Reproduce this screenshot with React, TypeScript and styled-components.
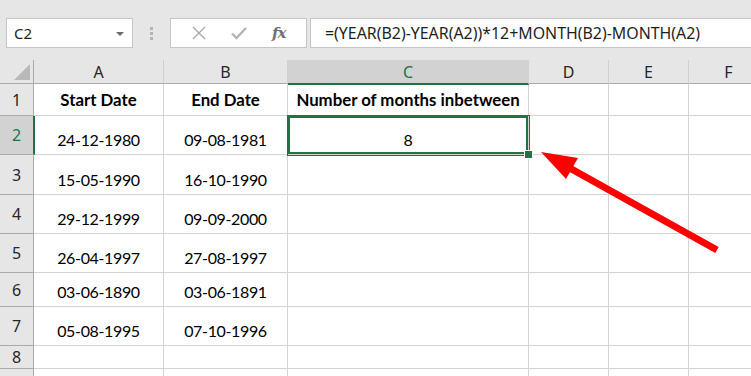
import React from 'react';
import styled, { createGlobalStyle } from 'styled-components';

const GlobalStyle = createGlobalStyle`
  html, body {
    margin: 0;
    padding: 0;
    background: #ffffff;
    overflow: hidden;
  }
  * { box-sizing: border-box; }
`;

// column widths (incl. right grid line) and row heights (incl. bottom line)
const colWidths = [34, 130, 124, 241, 80, 80, 80];
const rowHeights = [24, 32, 39, 40, 39, 39, 34, 39, 23, 22];

const letters = ['A', 'B', 'C', 'D', 'E', 'F'];

const data: string[][] = [
  ['Start Date', 'End Date', 'Number of months inbetween', '', '', ''],
  ['24-12-1980', '09-08-1981', '8', '', '', ''],
  ['15-05-1990', '16-10-1990', '', '', '', ''],
  ['29-12-1999', '09-09-2000', '', '', '', ''],
  ['26-04-1997', '27-08-1997', '', '', '', ''],
  ['03-06-1890', '03-06-1891', '', '', '', ''],
  ['05-08-1995', '07-10-1996', '', '', '', ''],
  ['', '', '', '', '', ''],
  ['', '', '', '', '', ''],
];

const Page = styled.div`
  width: 751px;
  height: 376px;
  overflow: hidden;
  background: #e6e6e6;
  display: flex;
  flex-direction: column;
`;

const Toolbar = styled.div`
  height: 60px;
  flex: none;
  display: flex;
  align-items: flex-start;
  padding: 18px 0 0 6px;
`;

const Box = styled.div<{ $w?: number }>`
  height: 30px;
  background: #ffffff;
  border: 1px solid #c6c6c6;
  display: flex;
  align-items: center;
  ${p => (p.$w ? `width: ${p.$w}px; flex: none;` : 'flex: 1; margin-right: -20px;')}
`;

const NameBox = styled(Box)`
  justify-content: space-between;
  padding: 0 8px 0 7px;
  font-family: 'Noto Sans', 'Open Sans', sans-serif;
  font-size: 15px;
  color: #1e1e1e;
`;

const Caret = styled.span`
  width: 0;
  height: 0;
  border-left: 4px solid transparent;
  border-right: 4px solid transparent;
  border-top: 4px solid #6a6a6a;
  margin-top: 1px;
`;

const Grip = styled.div`
  width: 37px;
  flex: none;
  height: 30px;
  display: flex;
  flex-direction: column;
  align-items: center;
  justify-content: center;
  gap: 2px;
  span {
    width: 3px;
    height: 3px;
    background: #b4b4b4;
  }
`;

const FxBox = styled(Box)`
  justify-content: space-around;
  padding: 0 8px 0 8px;
  margin-right: 3px;
`;

const Fx = styled.span`
  font-family: 'DejaVu Serif', 'Liberation Serif', serif;
  font-style: italic;
  font-weight: 700;
  font-size: 15px;
  color: #707070;
  letter-spacing: -1px;
`;

const Formula = styled(Box)`
  padding-left: 14px;
  font-family: 'Noto Sans', 'Open Sans', sans-serif;
  font-size: 15.9px;
  color: #1e1e1e;
  white-space: nowrap;
`;

const SheetWrap = styled.div`
  position: relative;
  flex: 1;
  overflow: hidden;
`;

const Grid = styled.div`
  display: grid;
  grid-template-columns: ${colWidths.map(w => `${w}px`).join(' ')};
  grid-template-rows: ${rowHeights.map(h => `${h}px`).join(' ')};
  background: #ffffff;
`;

const ColHead = styled.div<{ $sel?: boolean }>`
  background: ${p => (p.$sel ? '#d2d2d2' : '#e6e6e6')};
  border-right: 1px solid ${p => (p.$sel ? '#d2d2d2' : '#d0d0d0')};
  border-bottom: ${p => (p.$sel ? '2px solid #217346' : '1px solid #ababab')};
  margin-bottom: ${p => (p.$sel ? '-1px' : '0')};
  display: flex;
  align-items: center;
  justify-content: center;
  padding-top: 1px;
  font-family: 'Noto Sans', 'Open Sans', sans-serif;
  font-size: 16px;
  color: ${p => (p.$sel ? '#217346' : '#262626')};
  position: relative;
  z-index: 1;
`;

const Corner = styled.div`
  background: #e6e6e6;
  border-right: 1px solid #ababab;
  border-bottom: 1px solid #ababab;
  display: flex;
  align-items: flex-end;
  justify-content: flex-end;
  padding: 0 3px 3px 0;
  &::after {
    content: '';
    width: 0;
    height: 0;
    border-left: 16px solid transparent;
    border-bottom: 16px solid #b9b9b9;
  }
`;

const RowHead = styled.div<{ $sel?: boolean }>`
  background: ${p => (p.$sel ? '#d2d2d2' : '#e6e6e6')};
  border-right: ${p => (p.$sel ? '2px solid #217346' : '1px solid #ababab')};
  margin-right: ${p => (p.$sel ? '-1px' : '0')};
  border-bottom: 1px solid #ababab;
  display: flex;
  align-items: center;
  justify-content: center;
  font-family: 'Noto Sans', 'Open Sans', sans-serif;
  font-size: 16px;
  color: ${p => (p.$sel ? '#217346' : '#262626')};
  position: relative;
  z-index: 1;
`;

const Cell = styled.div<{ $bold?: boolean; $active?: boolean }>`
  position: relative;
  border-right: 1px solid #d4d4d4;
  border-bottom: 1px solid #d4d4d4;
  display: flex;
  align-items: flex-end;
  justify-content: center;
  padding-bottom: 5px;
  font-family: Lato, 'Liberation Sans', sans-serif;
  font-size: ${p => (p.$bold ? '16.8px' : '16px')};
  letter-spacing: ${p => (p.$bold ? '0' : '-0.35px')};
  font-weight: ${p => (p.$bold ? 700 : 400)};
  color: #000000;
  white-space: nowrap;
  ${p =>
    p.$active &&
    `
    box-shadow: inset 0 0 0 2px #217346, 1px 1px 0 0 #217346, -1px -1px 0 0 #217346, 1px -1px 0 0 #217346, -1px 1px 0 0 #217346;
    z-index: 2;
  `}
`;

const Handle = styled.span`
  position: absolute;
  right: -4px;
  bottom: -4px;
  width: 7px;
  height: 7px;
  background: #217346;
  border: 1px solid #ffffff;
  box-sizing: content-box;
  margin: -1px;
`;

const Overlay = styled.svg`
  position: absolute;
  left: 0;
  top: 0;
  pointer-events: none;
  z-index: 5;
`;

const App = () => {
  return (
    <Page>
      <GlobalStyle />
      <Toolbar>
        <NameBox $w={127}>
          <span>C2</span>
          <Caret />
        </NameBox>
        <Grip>
          <span />
          <span />
          <span />
        </Grip>
        <FxBox $w={137}>
          <svg width="14" height="14" viewBox="0 0 14 14">
            <path d="M1 1 L13 13 M13 1 L1 13" stroke="#a8a8a8" strokeWidth="1.4" fill="none" />
          </svg>
          <svg width="16" height="14" viewBox="0 0 16 14">
            <path d="M1 7.5 L5.5 12 L15 2" stroke="#b4b4b4" strokeWidth="2.4" fill="none" />
          </svg>
          <Fx>fx</Fx>
        </FxBox>
        <Formula>=(YEAR(B2)-YEAR(A2))*12+MONTH(B2)-MONTH(A2)</Formula>
      </Toolbar>
      <SheetWrap>
        <Grid>
          <Corner />
          {letters.map(l => (
            <ColHead key={l} $sel={l === 'C'}>
              {l}
            </ColHead>
          ))}
          {data.map((row, r) => (
            <React.Fragment key={r}>
              {/* row 9 sits below the visible edge, so its number is not shown */}
              <RowHead $sel={r === 1}>{r < 8 ? r + 1 : ''}</RowHead>
              {row.map((v, c) => (
                <Cell key={c} $bold={r === 0} $active={r === 1 && c === 2}>
                  {v}
                  {r === 1 && c === 2 && <Handle />}
                </Cell>
              ))}
            </React.Fragment>
          ))}
        </Grid>
        <Overlay width="751" height="316" viewBox="0 0 751 316">
          <line x1="566" y1="106" x2="717" y2="190" stroke="#ff0000" strokeWidth="7" />
          <polygon points="541,92 578,98 566,119" fill="#ff0000" />
        </Overlay>
      </SheetWrap>
    </Page>
  );
};

export default App;
